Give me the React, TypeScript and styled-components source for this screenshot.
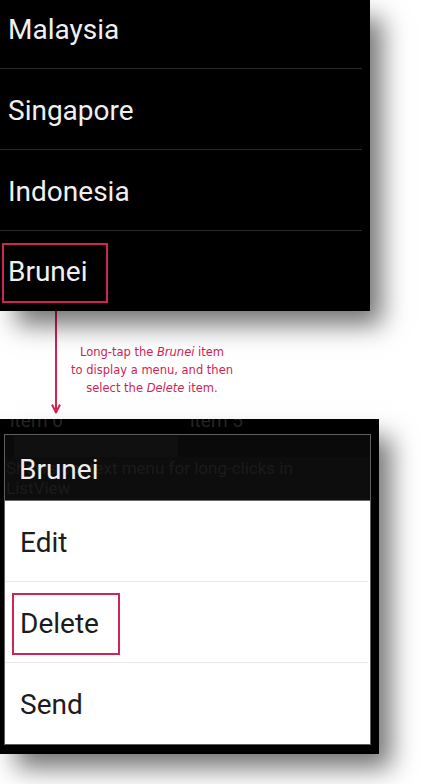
import React from 'react';
import styled, { createGlobalStyle } from 'styled-components';

const ACCENT = '#cf2456';

const GlobalStyle = createGlobalStyle`
  html, body {
    margin: 0;
    padding: 0;
    background: #ffffff;
  }
  body {
    font-family: Roboto, "Noto Sans", sans-serif;
    overflow: hidden;
  }
  * {
    box-sizing: border-box;
  }
`;

const Page = styled.div`
  width: 421px;
  height: 784px;
  display: flex;
  flex-direction: column;
  overflow: hidden;
`;

const Screen = styled.section`
  position: relative;
  z-index: 1;
  width: 370px;
  height: 311px;
  flex: none;
  background: #000;
  overflow: hidden;
  box-shadow: 14px 16px 24px -2px rgba(0, 0, 0, 0.55);
`;

const List = styled.ul`
  list-style: none;
  margin: -12px 0 0 0;
  padding: 0;
  display: flex;
  flex-direction: column;
`;

const Row = styled.li<{ $dark?: boolean; $indent: number; $trim: number; $last?: boolean }>`
  height: ${(p) => (p.$last ? 80 : 81)}px;
  display: flex;
  align-items: center;
  padding: 4px 0 0 ${(p) => p.$indent}px;
  margin-right: ${(p) => p.$trim}px;
  border-bottom: ${(p) =>
    p.$last ? 'none' : `1px solid ${p.$dark ? '#2a2a2a' : '#e9e9e9'}`};
  font-size: 28px;
  line-height: 28px;
  color: ${(p) => (p.$dark ? '#f0f0f0' : '#1c1c1c')};
`;

const Highlight = styled.span<{ $pad: string; $shift: number }>`
  display: inline-block;
  border: 2px solid ${ACCENT};
  padding: ${(p) => p.$pad};
  margin-left: -${(p) => p.$shift}px;
  line-height: 28px;
`;

const Connector = styled.div`
  height: 108px;
  flex: none;
  display: flex;
  padding-left: 51px;
`;

const Caption = styled.p`
  margin: 0;
  width: 182px;
  padding-top: 32px;
  text-align: center;
  font-family: "Comic Sans MS", "DejaVu Sans", sans-serif;
  font-size: 11.5px;
  line-height: 18px;
  color: ${ACCENT};

  em {
    font-style: italic;
  }
`;

const Frame = styled.section`
  width: 379px;
  height: 335px;
  flex: none;
  background: #000;
  padding: 0 8px 9px 4px;
  display: flex;
  flex-direction: column;
  box-shadow: 14px 16px 24px -2px rgba(0, 0, 0, 0.55);
`;

const BackdropRow = styled.div`
  height: 15px;
  flex: none;
  overflow: hidden;
  display: flex;
  align-items: flex-end;
  padding: 0 0 3px 6px;
  font-size: 19px;
  line-height: 20px;
  color: #242424;
  white-space: nowrap;
`;

const BackdropCell = styled.span<{ $width: number }>`
  width: ${(p) => p.$width}px;
  flex: none;
`;

const Dialog = styled.div`
  flex: 1;
  display: flex;
  flex-direction: column;
  border: 1px solid #5e5e5e;
  background: #fff;
`;

const Header = styled.div`
  position: relative;
  height: 66px;
  flex: none;
  padding: 21px 0 0 14px;
  background: #0a0a0a;
  border-bottom: 1px solid #6a6a6a;
`;

const Ghost = styled.div`
  position: absolute;
  inset: 0;
  display: flex;
  flex-direction: column;
  pointer-events: none;
`;

const GhostField = styled.div`
  margin: 1px 0 0 9px;
  width: 164px;
  height: 21px;
  flex: none;
  background: #101010;
`;

const GhostText = styled.div`
  flex: 1;
  padding: 1px 0 0 1px;
  background: #0d0d0d;
  font-size: 17px;
  line-height: 20px;
  color: #1b1b1b;
  white-space: nowrap;
`;

const Title = styled.h2`
  position: relative;
  margin: 0;
  font-weight: 400;
  font-size: 28px;
  line-height: 28px;
  color: #eeeeee;
`;

const Menu = styled.ul`
  list-style: none;
  margin: 0;
  padding: 0;
  flex: 1;
  display: flex;
  flex-direction: column;
  background: #fff;
`;

const Arrow = () => (
  <svg width="10" height="108" viewBox="0 0 10 108" fill="none">
    <path d="M5 0 V101" stroke={ACCENT} strokeWidth="2" />
    <path d="M1 93.5 L5 101.5 L9 93.5" stroke={ACCENT} strokeWidth="2" strokeLinejoin="round" />
  </svg>
);

const countries = ['Malaysia', 'Singapore', 'Indonesia'];

const App = () => {
  return (
    <Page>
      <GlobalStyle />
      <Screen>
        <List>
          {countries.map((name) => (
            <Row key={name} $dark $indent={8} $trim={8}>
              {name}
            </Row>
          ))}
          <Row $dark $last $indent={8} $trim={8}>
            <Highlight $pad="13px 18px 15px 4px" $shift={6}>
              Brunei
            </Highlight>
          </Row>
        </List>
      </Screen>

      <Connector>
        <Arrow />
        <Caption>
          Long-tap the <em>Brunei</em> item
          <br />
          to display a menu, and then
          <br />
          select the <em>Delete</em> item.
        </Caption>
      </Connector>

      <Frame>
        <BackdropRow>
          <BackdropCell $width={180}>item 0</BackdropCell>
          <BackdropCell $width={120}>item 5</BackdropCell>
        </BackdropRow>
        <Dialog>
          <Header>
            <Ghost>
              <GhostField />
              <GhostText>
                Shows context menu for long-clicks in
                <br />
                ListView
              </GhostText>
            </Ghost>
            <Title>Brunei</Title>
          </Header>
          <Menu>
            <Row $indent={15} $trim={2}>
              Edit
            </Row>
            <Row $indent={15} $trim={2}>
              <Highlight $pad="15px 19px 15px 6px" $shift={8}>
                Delete
              </Highlight>
            </Row>
            <Row $indent={15} $trim={2} $last>
              Send
            </Row>
          </Menu>
        </Dialog>
      </Frame>
    </Page>
  );
};

export default App;
